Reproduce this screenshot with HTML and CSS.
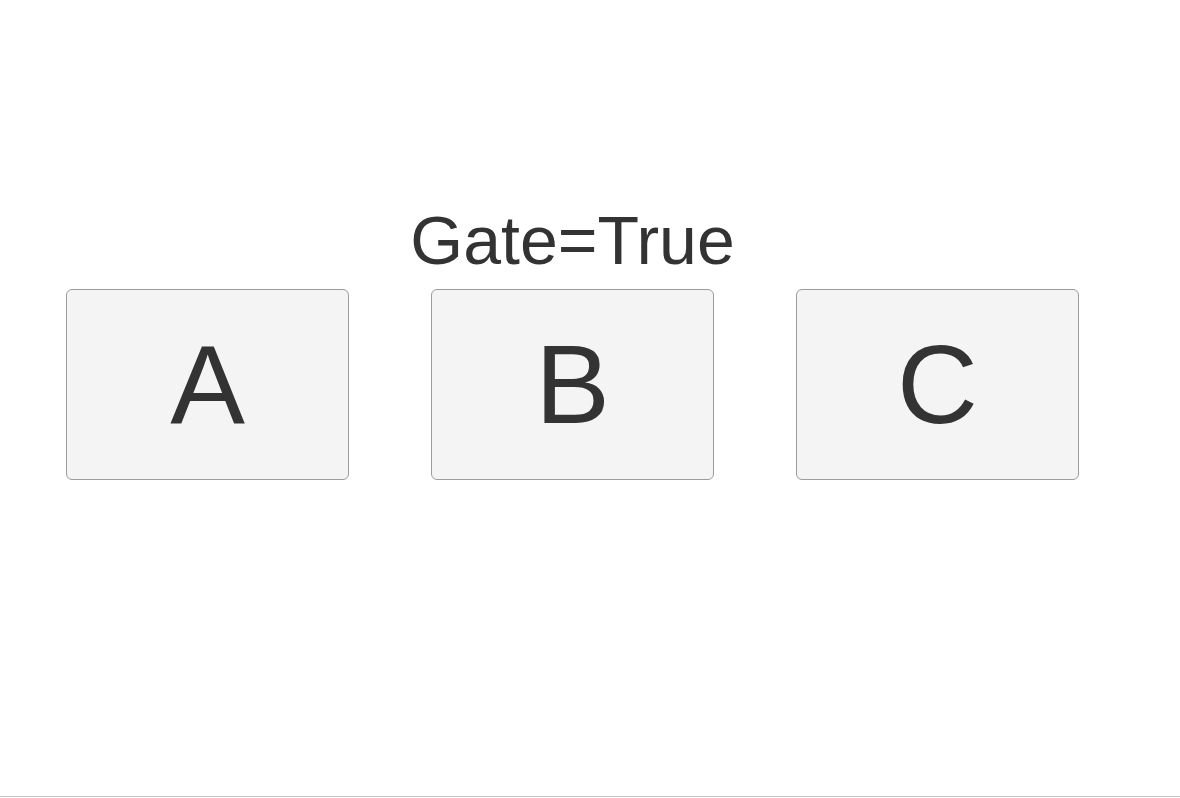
FILE: index.html
```html
<!DOCTYPE html>
<html lang="en">
<head>
    <meta charset="UTF-8">
    <meta name="viewport" content="width=device-width, initial-scale=1.0">
    <title>Gate</title>
    <link rel="stylesheet" href="styles.css">
</head>
<body>

    <div class="page">
        <div class="gate">Gate=True</div>
        <div class="choices">
            <button class="choice">A</button>
            <button class="choice">B</button>
            <button class="choice">C</button>
        </div>
    </div>

</body>
</html>
```

FILE: styles.css
```css
body {
    font-family: "Liberation Sans", Arial, sans-serif;
    margin: 0;
    color: #333;
    background: #fff;
}
.page {
    height: 797px;
    box-sizing: border-box;
    border-bottom: 1px solid #c4c4c4;
    padding: 202px 0 0 66px;
}
.gate {
    width: 1013px;
    text-align: center;
    font-size: 68px;
    line-height: 76px;
}
.choices {
    display: flex;
    gap: 82px;
    margin-top: 11px;
}
.choice {
    width: 283px;
    height: 191px;
    background-color: #f4f4f4;
    border: 1px solid #9c9c9c;
    border-radius: 6px;
    font-family: inherit;
    font-size: 112px;
    color: #333;
    padding: 0;
}
```
